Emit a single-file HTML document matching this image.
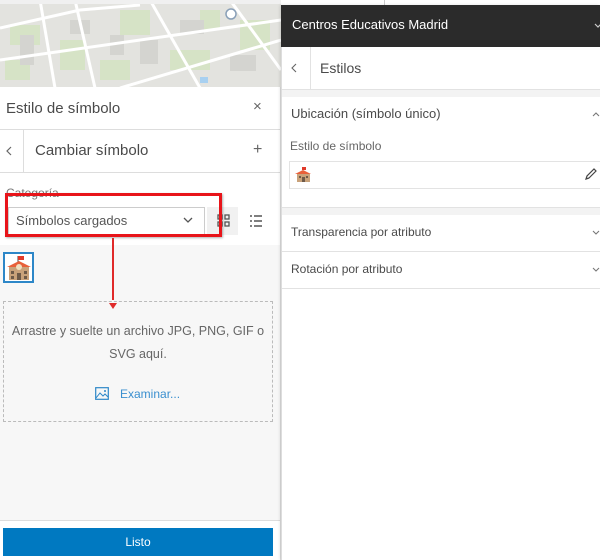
<!DOCTYPE html>
<html><head><meta charset="utf-8"><style>
*{box-sizing:border-box;margin:0;padding:0}
body{width:600px;height:560px;position:relative;overflow:hidden;font-family:"Liberation Sans",sans-serif;background:#fff;color:#4a4a4a}
.a{position:absolute}
</style></head><body>
<svg class="a" style="left:0;top:0" width="281" height="88" viewBox="0 0 281 88">
<rect width="281" height="88" fill="#e3e3df"/>
<g fill="#d6e3c6">
<rect x="10" y="25" width="30" height="20"/><rect x="60" y="40" width="25" height="30"/><rect x="120" y="10" width="30" height="25"/><rect x="170" y="50" width="40" height="20"/><rect x="240" y="20" width="30" height="30"/><rect x="5" y="60" width="25" height="20"/><rect x="100" y="60" width="30" height="20"/><rect x="200" y="10" width="20" height="20"/>
</g>
<g fill="#d4d4d0"><rect x="20" y="35" width="14" height="30"/><rect x="70" y="20" width="20" height="14"/><rect x="140" y="40" width="18" height="24"/><rect x="180" y="20" width="24" height="14"/><rect x="230" y="55" width="26" height="16"/><rect x="110" y="35" width="14" height="20"/></g>
<g stroke="#fff" stroke-width="3" fill="none">
<path d="M0 28 L80 10 L140 5"/><path d="M75 0 L95 88"/><path d="M40 0 L55 88"/><path d="M0 60 L281 20"/><path d="M230 0 L281 70"/><path d="M150 0 L200 88"/><path d="M120 88 L281 40"/>
</g>
<circle cx="231" cy="14" r="5" fill="#fff" stroke="#8aa0b8" stroke-width="1.5"/>
<rect x="200" y="77" width="8" height="6" fill="#a8d0f0"/>
</svg>
<div class="a" style="left:0;top:0;width:281px;height:4px;background:#f0f0f0"></div>
<div class="a" style="left:281px;top:0;width:319px;height:5px;background:#fff"></div>
<div class="a" style="left:384px;top:0;width:1px;height:5px;background:#ccc"></div>
<div class="a" style="left:0;top:87px;width:281px;height:473px;background:#fff;border-right:1px solid #ddd"></div>
<div class="a" style="left:6px;top:100px;font-size:15px;color:#4a4a4a">Estilo de símbolo</div>
<div class="a" style="left:253px;top:98px;font-size:15px;color:#666">×</div>
<div class="a" style="left:0;top:129px;width:280px;height:1px;background:#ddd"></div>
<div class="a" style="left:23px;top:130px;width:1px;height:42px;background:#ddd"></div>
<svg class="a" style="left:5px;top:146px" width="8" height="10"><path d="M6 1 L2 5 L6 9" fill="none" stroke="#666" stroke-width="1.2"/></svg>
<div class="a" style="left:35px;top:142px;font-size:15px;color:#4a4a4a">Cambiar símbolo</div>
<div class="a" style="left:253px;top:141px;font-size:16px;color:#666">+</div>
<div class="a" style="left:0;top:172px;width:280px;height:1px;background:#ddd"></div>
<div class="a" style="left:6px;top:186px;font-size:12px;color:#777">Categoría</div>
<div class="a" style="left:8px;top:207px;width:197px;height:28px;border:1px solid #ccc;background:#fff"></div>
<div class="a" style="left:16px;top:213px;font-size:13px;color:#555">Símbolos cargados</div>
<svg class="a" style="left:183px;top:217px" width="10" height="7"><path d="M1 1 L5 5 L9 1" fill="none" stroke="#555" stroke-width="1.3"/></svg>
<div class="a" style="left:207px;top:207px;width:31px;height:28px;background:#f1f1f1"></div>
<svg class="a" style="left:217px;top:214px" width="13" height="13"><g fill="none" stroke="#555" stroke-width="1.3"><rect x="1" y="1" width="4" height="4"/><rect x="8" y="1" width="4" height="4"/><rect x="1" y="8" width="4" height="4"/><rect x="8" y="8" width="4" height="4"/></g></svg>
<svg class="a" style="left:249px;top:214px" width="14" height="14"><g stroke="#555" stroke-width="1.4"><path d="M1 2h2M5 2h8M1 7h2M5 7h8M1 12h2M5 12h8"/></g></svg>
<div class="a" style="left:5px;top:193px;width:217px;height:44px;border:3px solid #e8141a;box-shadow:1px 1px 2px rgba(0,0,0,.3)"></div>
<div class="a" style="left:0;top:245px;width:280px;height:275px;background:#f7f7f7"></div>
<div class="a" style="left:3px;top:252px;width:31px;height:31px;border:2px solid #2d87c8;background:#fff"></div>
<svg class="a" style="left:6px;top:255px" width="26" height="26"><path d="M12 1v7" stroke="#444"/><rect x="12" y="1" width="6" height="4" fill="#e03a2a"/><path d="M1 12 L13 6 L25 12Z" fill="#e8603a"/><rect x="3" y="12" width="20" height="13" fill="#c9a27a"/><circle cx="13" cy="12" r="3" fill="#f0e0c0"/><g fill="#6e5a48"><rect x="5" y="16" width="3" height="3"/><rect x="18" y="16" width="3" height="3"/><rect x="11" y="18" width="4" height="7"/><rect x="5" y="21" width="3" height="3"/><rect x="18" y="21" width="3" height="3"/></g></svg>
<div class="a" style="left:112px;top:238px;width:2px;height:62px;background:#e02a2a"></div>
<div class="a" style="left:109px;top:303px;width:0;height:0;border-left:4px solid transparent;border-right:4px solid transparent;border-top:6px solid #e02a2a"></div>
<div class="a" style="left:3px;top:301px;width:270px;height:121px;border:1.5px dashed #bbb"></div>
<div class="a" style="left:3px;top:320px;width:270px;text-align:center;font-size:12.5px;line-height:23px;color:#666">Arrastre y suelte un archivo JPG, PNG, GIF o<br>SVG aquí.</div>
<svg class="a" style="left:95px;top:387px" width="14" height="13"><rect x="0.7" y="0.7" width="12.6" height="11.6" fill="none" stroke="#2d87c8" stroke-width="1.2"/><path d="M1 11 L5 6 L8 9 L10 7 L13 10" fill="none" stroke="#2d87c8"/><circle cx="10" cy="4" r="1" fill="#2d87c8"/></svg>
<div class="a" style="left:120px;top:387px;font-size:12px;color:#3a8fcf">Examinar...</div>
<div class="a" style="left:0;top:520px;width:280px;height:1px;background:#ddd"></div>
<div class="a" style="left:3px;top:528px;width:270px;height:28px;background:#0079c1;color:#fff;font-size:12px;text-align:center;line-height:28px">Listo</div>
<div class="a" style="left:281px;top:5px;width:319px;height:555px;background:#fff;border-left:1px solid #ddd;box-shadow:-1px 0 3px rgba(0,0,0,.12)"></div>
<div class="a" style="left:281px;top:5px;width:319px;height:42px;background:#2b2b2b"></div>
<div class="a" style="left:292px;top:17px;font-size:13px;color:#fff">Centros Educativos Madrid</div>
<svg class="a" style="left:594px;top:23px" width="8" height="6"><path d="M1 1 L4 4 L7 1" fill="none" stroke="#ccc" stroke-width="1.2"/></svg>
<div class="a" style="left:310px;top:47px;width:1px;height:42px;background:#e2e2e2"></div>
<svg class="a" style="left:291px;top:63px" width="6" height="10"><path d="M5 1 L1 5 L5 9" fill="none" stroke="#666" stroke-width="1.1"/></svg>
<div class="a" style="left:320px;top:60px;font-size:14px;color:#4a4a4a">Estilos</div>
<div class="a" style="left:282px;top:89px;width:318px;height:8px;background:#f3f3f3;border-top:1px solid #e2e2e2"></div>
<div class="a" style="left:291px;top:106px;font-size:13px;color:#4a4a4a">Ubicación (símbolo único)</div>
<svg class="a" style="left:592px;top:111px" width="8" height="6"><path d="M1 5 L4 2 L7 5" fill="none" stroke="#777" stroke-width="1.1"/></svg>
<div class="a" style="left:290px;top:139px;font-size:12px;color:#666">Estilo de símbolo</div>
<div class="a" style="left:289px;top:161px;width:315px;height:28px;border:1.5px solid #e3e3e3"></div>
<svg class="a" style="left:295px;top:166px" width="17" height="17"><rect x="7" y="1" width="4" height="3" fill="#e03a2a"/><path d="M0 8 L8 4 L16 8Z" fill="#e8603a"/><rect x="2" y="8" width="13" height="8" fill="#c9a27a"/><g fill="#6e5a48"><rect x="4" y="10" width="2" height="2"/><rect x="11" y="10" width="2" height="2"/><rect x="7" y="11" width="3" height="5"/></g></svg>
<svg class="a" style="left:584px;top:167px" width="13" height="14"><path d="M2 12 L3 9 L10 2 L12 4 L5 11Z M2 12 L5 11" fill="none" stroke="#444" stroke-width="1.2"/></svg>
<div class="a" style="left:282px;top:207px;width:318px;height:8px;background:#f3f3f3;border-top:1px solid #e2e2e2"></div>
<div class="a" style="left:291px;top:225px;font-size:12px;color:#4a4a4a">Transparencia por atributo</div>
<svg class="a" style="left:592px;top:230px" width="8" height="6"><path d="M1 1 L4 4 L7 1" fill="none" stroke="#777" stroke-width="1.1"/></svg>
<div class="a" style="left:282px;top:251px;width:318px;height:1px;background:#e2e2e2"></div>
<div class="a" style="left:291px;top:262px;font-size:12px;color:#4a4a4a">Rotación por atributo</div>
<svg class="a" style="left:592px;top:267px" width="8" height="6"><path d="M1 1 L4 4 L7 1" fill="none" stroke="#777" stroke-width="1.1"/></svg>
<div class="a" style="left:282px;top:288px;width:318px;height:1px;background:#e2e2e2"></div>
</body></html>
